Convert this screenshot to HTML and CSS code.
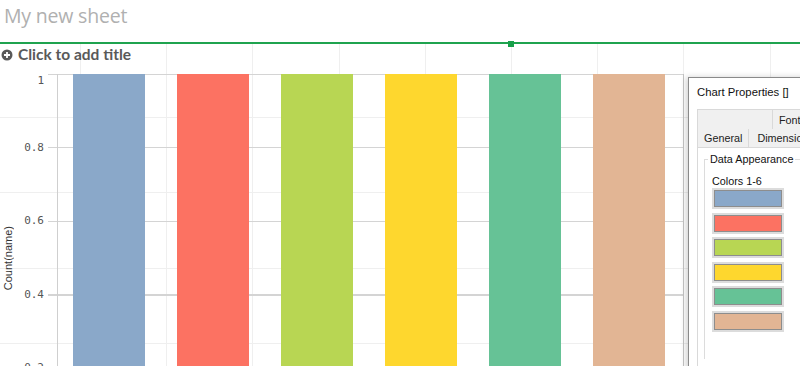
FILE: index.html
```html
<!DOCTYPE html>
<html lang="en">
<head>
<meta charset="utf-8">
<title>My new sheet</title>
<link rel="stylesheet" href="styles.css">
</head>
<body>
<div class="app">
	<div class="sheet-head">
		<span class="sheet-name">My new sheet</span>
	</div>
	<div class="sheet-rule">
		<span class="rule-handle"></span>
	</div>
	<div class="sheet-grid">
		<div class="chart">
			<div class="chart-title">
				<svg class="add-icon" width="12" height="12" viewBox="0 0 12 12">
					<circle cx="6" cy="6" r="5.5" fill="#595959"/>
					<path d="M6 3v6M3 6h6" stroke="#fff" stroke-width="1.8"/>
				</svg>
				<span>Click to add title</span>
			</div>
			<div class="chart-body">
				<div class="y-title"><span>Count(name)</span></div>
				<div class="y-labels">
					<div class="y-row first"><span>1</span></div>
					<div class="y-row"><span>0.8</span></div>
					<div class="y-row"><span>0.6</span></div>
					<div class="y-row"><span>0.4</span></div>
					<div class="y-row"><span>0.2</span></div>
				</div>
				<div class="plot">
					<div class="bars">
						<div class="bar c1"></div>
						<div class="bar c2"></div>
						<div class="bar c3"></div>
						<div class="bar c4"></div>
						<div class="bar c5"></div>
						<div class="bar c6"></div>
					</div>
				</div>
			</div>
		</div>
	</div>

	<div class="dialog">
		<div class="dlg-title">Chart Properties []</div>
		<div class="dlg-body">
			<div class="tabs tabs-back">
				<div class="tab wide"></div>
				<div class="tab">Font</div>
			</div>
			<div class="tabs tabs-front">
				<div class="tab">General</div>
				<div class="tab">Dimensions</div>
			</div>
			<div class="dlg-panel">
				<div class="group">
					<div class="group-label">Data Appearance</div>
					<div class="field-label">Colors 1-6</div>
					<div class="swatches">
						<div class="swatch"><span class="c1"></span></div>
						<div class="swatch"><span class="c2"></span></div>
						<div class="swatch"><span class="c3"></span></div>
						<div class="swatch"><span class="c4"></span></div>
						<div class="swatch"><span class="c5"></span></div>
						<div class="swatch"><span class="c6"></span></div>
					</div>
				</div>
			</div>
		</div>
	</div>
</div>
</body>
</html>
```

FILE: styles.css
```css
*{
	padding: 0;
	margin: 0;
	box-sizing: border-box;
}
body {
	width: 800px;
	height: 366px;
	overflow: hidden;
	background: #fff;
	font-family: "Open Sans", "Liberation Sans", sans-serif;
}
.app {
	position: relative;
	width: 800px;
	height: 366px;
	overflow: hidden;
}

/* sheet header */
.sheet-head {
	height: 42px;
	padding: 2px 0 0 4px;
}
.sheet-name {
	font-size: 19.5px;
	color: #b0b0b0;
	letter-spacing: -0.2px;
}
.sheet-rule {
	position: relative;
	height: 2px;
	background: #1fa34f;
}
.rule-handle {
	position: absolute;
	left: 508px;
	top: -1px;
	width: 6px;
	height: 6px;
	background: #17a04a;
}

/* sheet with faint grid */
.sheet-grid {
	height: 322px;
	background:
		repeating-linear-gradient(to right, transparent 0 80px, #efefef 80px 81px, transparent 81px 86.2px),
		repeating-linear-gradient(to bottom, transparent 0 73px, #efefef 73px 74px, transparent 74px 75.3px);
}
.chart {
	width: 684px;
	display: flex;
	flex-direction: column;
}
.chart-title {
	height: 30px;
	display: flex;
	align-items: center;
	gap: 5px;
	padding: 0 0 10px 1px;
	font-family: "Lato", "Open Sans", sans-serif;
	font-size: 15.5px;
	font-weight: bold;
	color: #595959;
}
.add-icon {
	margin-top: 2px;
}
.chart-body {
	display: flex;
	height: 300px;
}
.y-title {
	width: 16px;
	display: flex;
	align-items: center;
	justify-content: center;
	padding-top: 68px;
}
.y-title span {
	writing-mode: vertical-rl;
	transform: rotate(180deg);
	font-family: "Liberation Sans", sans-serif;
	font-size: 11px;
	color: #333;
	white-space: nowrap;
}
.y-labels {
	width: 28px;
	font-family: "DejaVu Sans Mono", monospace;
	font-size: 11px;
	color: #555;
	text-align: right;
}
.y-row {
	height: 73.5px;
	line-height: 0;
}
.y-row.first {
	line-height: 14px;
}
.plot {
	flex: 1;
	margin-left: 4px;
	background: repeating-linear-gradient(to bottom, #d4d4d4 0 1px, transparent 1px 73.5px);
	border-right: 1px solid #c4c4c4;
}
.bars {
	margin-left: 9px;
	height: 100%;
	border-left: 1px solid #cfcfcf;
	padding-left: 15px;
	display: flex;
	gap: 32px;
}
.bar {
	width: 72px;
	height: 100%;
}
.c1 { background: #8aa8c9; }
.c2 { background: #fc7262; }
.c3 { background: #b8d653; }
.c4 { background: #fed72e; }
.c5 { background: #66c296; }
.c6 { background: #e2b594; }

/* properties dialog */
.dialog {
	position: absolute;
	left: 688px;
	top: 77px;
	width: 130px;
	height: 300px;
	background: #fff;
	border: 1px solid #8a8a8a;
	box-shadow: -2px 0 6px rgba(0, 0, 0, 0.18);
	font-family: "Liberation Sans", sans-serif;
	font-size: 10.8px;
	color: #111;
}
.dlg-title {
	height: 31px;
	padding: 8px 0 0 8px;
	font-size: 11.3px;
}
.dlg-body {
	padding-left: 8px;
	height: 100%;
}
.tabs {
	display: flex;
	background: #f0f0f0;
	border-left: 1px solid #d9d9d9;
}
.tabs-back {
	height: 20px;
	border-top: 1px solid #d9d9d9;
}
.tabs-front {
	height: 18px;
}
.tab {
	padding: 4px 6px 0;
	border-right: 1px solid #d9d9d9;
	white-space: nowrap;
	color: #222;
}
.tab.wide {
	width: 75px;
}
.tabs-front .tab {
	padding-top: 3px;
	width: 54px;
}
.tabs-front .tab + .tab {
	width: auto;
	padding-left: 8px;
}
.dlg-panel {
	height: 220px;
	background: #fff;
	border: 1px solid #d9d9d9;
	padding: 11px 0 0 6px;
}
.group {
	border-left: 1px solid #dcdcdc;
	border-top: 1px solid #dcdcdc;
	height: 200px;
	padding: 0 0 0 7px;
}
.group-label {
	margin: -7px 0 0 -4px;
	padding: 0 2px;
	background: #fff;
	width: max-content;
}
.field-label {
	margin: 10px 0 1px 0;
}
.swatches {
	display: flex;
	flex-direction: column;
	gap: 3.6px;
}
.swatch {
	width: 72px;
	height: 21px;
	background: #dcdcdc;
	padding: 2px;
}
.swatch span {
	display: block;
	height: 100%;
	border: 1px solid #8d8d8d;
}
```
